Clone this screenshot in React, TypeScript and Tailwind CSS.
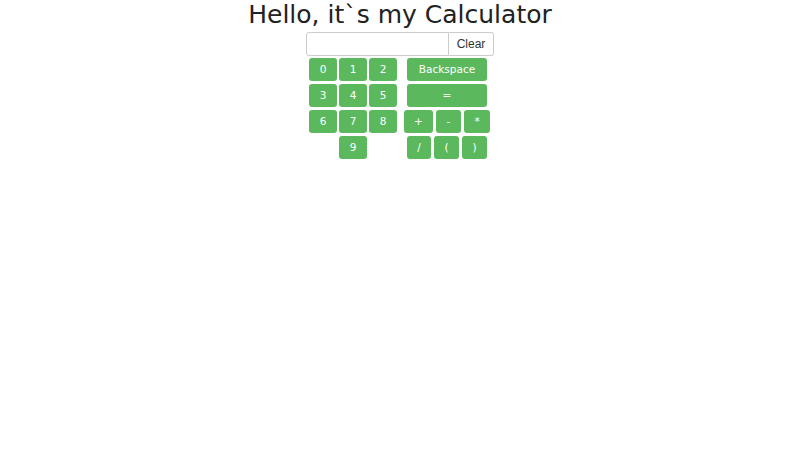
const btn =
  "h-[23px] rounded-[3px] bg-[#5cb85c] text-white text-[10.5px] flex items-center justify-center"

function Key({ label, w = "w-[28px]" }: { label: string; w?: string }) {
  return <button className={`${btn} ${w}`}>{label}</button>
}

export default function App() {
  return (
    <div className="w-[800px] h-[450px] bg-white flex flex-col items-center" style={{ fontFamily: '"DejaVu Sans", sans-serif' }}>
      <h1 className="text-[25px] leading-[30px] h-[32px] text-[#222]">Hello, it`s my Calculator</h1>
      <div className="flex h-[24px]">
        <input className="w-[143px] h-[24px] border border-[#ccc] rounded-l-[3px] outline-none" />
        <button
          className="w-[45px] h-[24px] border border-l-0 border-[#ccc] rounded-r-[3px] text-[12px] text-[#333] bg-white"
          style={{ fontFamily: '"Liberation Sans", Arial, sans-serif' }}
        >
          Clear
        </button>
      </div>
      <div className="flex gap-[7px] mt-[2px] mr-[1px]">
        <div className="w-[88px] flex flex-col gap-[3px]">
          <div className="flex justify-center gap-[2px]">
            <Key label="0" />
            <Key label="1" />
            <Key label="2" />
          </div>
          <div className="flex justify-center gap-[2px]">
            <Key label="3" />
            <Key label="4" />
            <Key label="5" />
          </div>
          <div className="flex justify-center gap-[2px]">
            <Key label="6" />
            <Key label="7" />
            <Key label="8" />
          </div>
          <div className="flex justify-center gap-[2px]">
            <Key label="9" />
          </div>
        </div>
        <div className="w-[86px] flex flex-col gap-[3px]">
          <div className="flex justify-center">
            <Key label="Backspace" w="w-[80px]" />
          </div>
          <div className="flex justify-center">
            <Key label="=" w="w-[80px]" />
          </div>
          <div className="flex justify-center gap-[3px]">
            <Key label="+" w="w-[29px]" />
            <Key label="-" w="w-[25px]" />
            <Key label="*" w="w-[26px]" />
          </div>
          <div className="flex justify-center gap-[3px]">
            <Key label="/" w="w-[24px]" />
            <Key label="(" w="w-[25px]" />
            <Key label=")" w="w-[25px]" />
          </div>
        </div>
      </div>
    </div>
  )
}
